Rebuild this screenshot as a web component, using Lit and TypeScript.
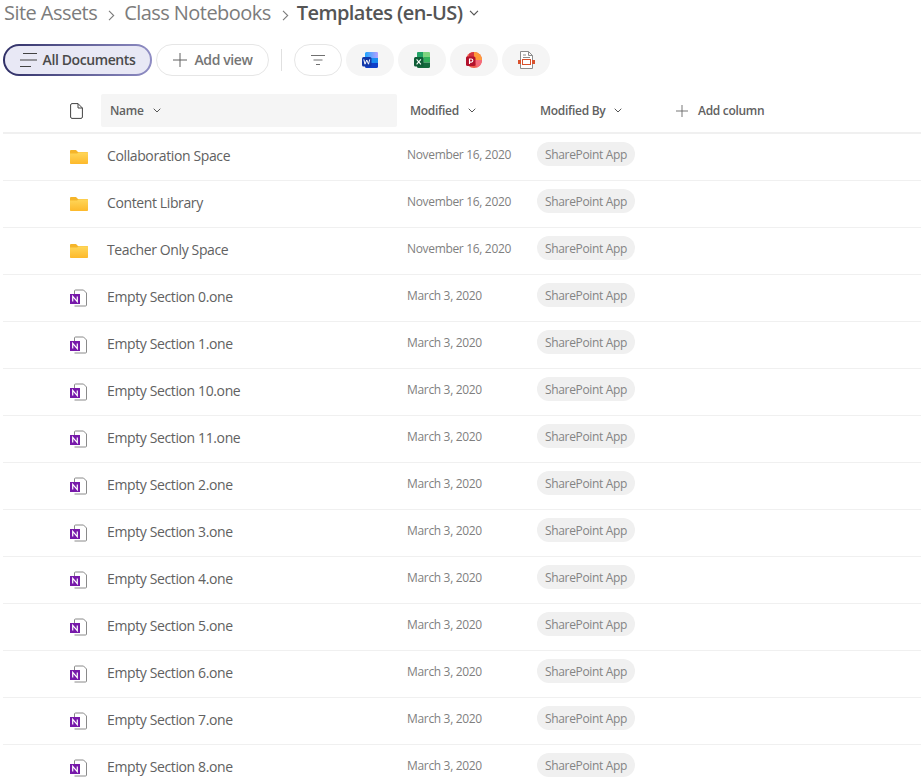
import { LitElement, html, css, svg } from "lit";
import { customElement } from "lit/decorators.js";

const FILES = ["0", "1", "10", "11", "2", "3", "4", "5", "6", "7", "8"];
const ROWS = [
  ...["Collaboration Space", "Content Library", "Teacher Only Space"].map((name) => ({ name, date: "November 16, 2020", folder: true })),
  ...FILES.map((n) => ({ name: `Empty Section ${n}.one`, date: "March 3, 2020", folder: false })),
];

const sepIcon = svg`<svg width="7" height="11" viewBox="0 0 7 11"><path d="M1 .8 5.700 5.500 1 10.200" fill="none" stroke="#7c7c7c" stroke-width="1.100"/></svg>`;

const chevron = html`<svg class="chev" width="8" height="5" viewBox="0 0 8 5"><path d="M.7.7 4 4l3.300-3.300" fill="none" stroke="#555" stroke-width="1"/></svg>`;
const plus = html`<svg width="14" height="14" viewBox="0 0 14 14"><path d="M7 0v14M0 7h14" stroke="#616161" stroke-width="1"/></svg>`;

const folderIcon = html`<svg class="folder" width="18" height="14" viewBox="0 0 18 14">
  <defs><linearGradient id="fg" x1="0" y1="0" x2="0" y2="1"><stop offset="0" stop-color="#ffd75a"/><stop offset="1" stop-color="#fdb92b"/></linearGradient></defs>
  <path d="M0 1.200C0 .5.5 0 1.200 0h4.300c.4 0 .7.1 1 .4L8 2h8.800c.7 0 1.200.5 1.200 1.200v9.600c0 .7-.5 1.200-1.200 1.200H1.200C.5 14 0 13.500 0 12.800z" fill="#f5b52a"/>
  <path d="M0 3.400h7.200L8.600 2.200h8.200c.7 0 1.200.5 1.200 1.200v9.400c0 .7-.5 1.200-1.200 1.200H1.200C.5 14 0 13.500 0 12.800z" fill="url(#fg)"/>
</svg>`;

const oneIcon = html`<svg width="18" height="18" viewBox="0 0 18 18">
  <path d="M4.500 5V2a1 1 0 0 1 1-1h8l3 3v12a1 1 0 0 1-1 1h-11" fill="#fff" stroke="#8a8a8a" stroke-width="1"/>
  <rect x="0" y="5" width="10" height="10" fill="#7719aa"/>
  <path d="M2.700 12.600V7.400l4.600 5.200V7.400" fill="none" stroke="#fff" stroke-width="1.200"/>
</svg>`;

const docIcon = html`<svg width="13" height="16" viewBox="0 0 13 16"><path d="M.6 2C.6 1.200 1.200.6 2 .6h6l4.400 4.400V14c0 .8-.6 1.400-1.400 1.400H2c-.8 0-1.400-.6-1.400-1.400zM8 .6V5h4.400" fill="#fff" stroke="#424242" stroke-width="1"/></svg>`;

const filterIcon = html`<svg width="14" height="10" viewBox="0 0 14 10"><path d="M0 .5h14M2.500 5h9M5 9.500h4" stroke="#707070" stroke-width="1"/></svg>`;

const listIcon = html`<svg width="17" height="14" viewBox="0 0 17 14"><path d="M3 .5h14M0 7h17M0 13.500h11" stroke="#424242" stroke-width="1"/></svg>`;

const wordIcon = html`<svg width="16" height="16" viewBox="0 0 16 16">
  <defs><linearGradient id="wg" x1="0" y1="0" x2="1" y2="0"><stop offset="0" stop-color="#1fa5ff"/><stop offset="1" stop-color="#b5a0ff"/></linearGradient></defs>
  <path d="M3 1.500A1.500 1.500 0 0 1 4.500 0H15a1 1 0 0 1 1 1v5H3z" fill="url(#wg)"/>
  <rect x="3" y="6" width="13" height="5" fill="#1a8cf0"/>
  <path d="M3 11h13v3.500a1.500 1.500 0 0 1-1.500 1.500h-10A1.500 1.500 0 0 1 3 14.500z" fill="#0f3fc8"/>
  <rect x="0" y="5" width="9.500" height="9.500" rx="1.500" fill="#1238a8"/>
  <path d="M1.800 7.400l1.200 4.800 1.750-4.200 1.750 4.200 1.200-4.800" fill="none" stroke="#fff" stroke-width="1"/>
</svg>`;

const excelIcon = html`<svg width="16" height="16" viewBox="0 0 16 16">
  <path d="M4 0h5v5H3V1a1 1 0 0 1 1-1z" fill="#21a366"/>
  <path d="M9 0h6a1 1 0 0 1 1 1v4H9z" fill="#7fd47f"/>
  <rect x="3" y="5" width="6.500" height="5.500" fill="#17804a"/>
  <rect x="9.500" y="5" width="6.500" height="5.500" fill="#33b05b"/>
  <path d="M3 10.500h13v4A1.500 1.500 0 0 1 14.500 16h-10A1.500 1.500 0 0 1 3 14.500z" fill="#14693c"/>
  <rect x="0" y="5" width="9.500" height="9.500" rx="1.500" fill="#0e5c36"/>
  <path d="M2.600 7.300l4.300 5M6.900 7.300l-4.300 5" stroke="#fff" stroke-width="1.100"/>
</svg>`;

const pptIcon = html`<svg width="16" height="16" viewBox="0 0 16 16">
  <circle cx="8" cy="8" r="8" fill="#ee5a4a"/>
  <path d="M8 0a8 8 0 0 1 8 8H8z" fill="#ff9a3a"/>
  <path d="M8 8h8a8 8 0 0 1-5 7.400z" fill="#f46a7a"/>
  <path d="M3 1.800A8 8 0 0 1 8 0v8H3z" fill="#d5333f"/>
  <rect x="0" y="4.500" width="9.500" height="9.500" rx="1.500" fill="#b3112c"/>
  <path d="M3.500 12V7h1.800a1.500 1.500 0 0 1 0 3.100H3.500" fill="none" stroke="#fff" stroke-width="1.100"/>
</svg>`;

const pdfIcon = html`<svg width="17" height="18" viewBox="0 0 17 18">
  <path d="M2.500 .5h8l4 4v13h-12zM10.500 .5v4h4M5 4h3M5 6.500h7" fill="#fff" stroke="#8c8c8c" stroke-width="1"/>
  <rect x="4.500" y="8.500" width="8" height="5" fill="#fff" stroke="#d9512c" stroke-width="1"/>
  <rect x="0" y="9" width="3" height="4" fill="#d9512c"/>
  <rect x="14" y="9" width="3" height="4" fill="#d9512c"/>
</svg>`;

@customElement("app-root")
export class AppRoot extends LitElement {
  static styles = css`
    :host {
      display: block;
      height: 100vh;
      overflow: hidden;
      background: #fff;
      font-family: "Open Sans", "Noto Sans", sans-serif;
      color: #616161;
    }
    .crumbs {
      display: flex;
      align-items: center;
      height: 26px;
      padding-left: 4px;
      font-size: 20px;
      letter-spacing: -0.55px;
      color: #7c7c7c;
      white-space: nowrap;
    }
    .crumbs span { position: relative; top: -1px; }
    .crumbs .sep { margin: 1px 9px 0 11px; top: 0; }
    .crumbs .sep.second { margin-right: 8px; }
    .crumbs .current { font-weight: 600; color: #555; }
    .crumbs .chev { margin-left: 7px; width: 10px; height: 6px; }
    .toolbar {
      display: flex;
      align-items: center;
      gap: 4px;
      height: 32px;
      margin: 18px 0 18px 3px;
    }
    .pill {
      display: flex;
      align-items: center;
      justify-content: center;
      box-sizing: border-box;
      height: 32px;
      border-radius: 16px;
      font-size: 14px;
      font-weight: 600;
      letter-spacing: -0.4px;
      white-space: nowrap;
    }
    .pill span { position: relative; top: -1px; }
    .active {
      width: 149px;
      gap: 6px;
      border: 2px solid transparent;
      background: linear-gradient(#e8e8f5, #e8e8f5) padding-box,
        linear-gradient(90deg, #2f2f66, #8f8dc4) border-box;
      color: #4a4a4a;
    }
    .outline { border: 1px solid #e6e6e6; background: #fff; color: #757575; }
    .add { width: 113px; gap: 8px; }
    .filter { width: 48px; }
    .divider { width: 1px; height: 22px; background: #e0e0e0; margin: 0 8px; }
    .app { width: 48px; background: #f5f5f5; }
    .table { margin-left: 3px; }
    .row {
      display: grid;
      grid-template-columns: 98px 296px 130px 1fr;
      align-items: center;
    }
    .head {
      height: 38px;
      align-items: start;
      border-bottom: 2px solid #f0f0f0;
      font-size: 12px;
      font-weight: 600;
      letter-spacing: -0.3px;
      color: #616161;
    }
    .head > div {
      display: flex;
      align-items: center;
      height: 33px;
      white-space: nowrap;
    }
    .head .chev { margin-left: 9px; }
    .head .ico { padding-left: 67px; }
    .head .name { padding-left: 9px; background: #f5f5f5; border-radius: 2px; }
    .head .col { padding-left: 13px; }
    .head .by { padding-left: 13px; }
    .body {
      height: 47px;
      box-sizing: border-box;
      border-bottom: 1px solid #f0f0f0;
    }
    .body .ico { padding-left: 67px; display: flex; align-items: center; margin-top: -1px; }
    .body .title {
      padding-left: 6px;
      font-size: 14px;
      letter-spacing: -0.38px;
      color: #616161;
      white-space: nowrap;
      margin-top: -4px;
    }
    .body .date {
      padding-left: 10px;
      font-size: 12px;
      letter-spacing: -0.33px;
      color: #7f7f7f;
      white-space: nowrap;
      margin-top: -5px;
    }
    .body .who { padding-left: 10px; margin-top: -6px; }
    .chip {
      display: inline-flex;
      align-items: center;
      justify-content: center;
      width: 98px;
      height: 24px;
      border-radius: 12px;
      background: #f0f0f0;
      font-size: 12px;
      letter-spacing: -0.33px;
      color: #848484;
      white-space: nowrap;
    }
    .by-label { display: flex; align-items: center; width: 136px; }
    .addcolumn { display: flex; align-items: center; gap: 10px; }
    .addcolumn svg { width: 12px; height: 12px; }
  `;

  render() {
    return html`
      <nav class="crumbs">
        <span>Site Assets</span><span class="sep">${sepIcon}</span>
        <span>Class Notebooks</span><span class="sep second">${sepIcon}</span>
        <span class="current">Templates (en-US)</span>${chevron}
      </nav>
      <div class="toolbar">
        <div class="pill active">${listIcon}<span>All Documents</span></div>
        <div class="pill outline add">${plus}<span>Add view</span></div>
        <div class="divider"></div>
        <div class="pill outline filter">${filterIcon}</div>
        <div class="pill app">${wordIcon}</div>
        <div class="pill app">${excelIcon}</div>
        <div class="pill app">${pptIcon}</div>
        <div class="pill app">${pdfIcon}</div>
      </div>
      <div class="table">
        <div class="row head">
          <div class="ico">${docIcon}</div>
          <div class="name">Name ${chevron}</div>
          <div class="col">Modified ${chevron}</div>
          <div class="by">
            <span class="by-label">Modified By ${chevron}</span>
            <span class="addcolumn">${plus}<span>Add column</span></span>
          </div>
        </div>
        ${ROWS.map(
          (r) => html`
            <div class="row body">
              <div class="ico">${r.folder ? folderIcon : oneIcon}</div>
              <div class="title">${r.name}</div>
              <div class="date">${r.date}</div>
              <div class="who"><span class="chip">SharePoint App</span></div>
            </div>
          `
        )}
      </div>
    `;
  }
}
